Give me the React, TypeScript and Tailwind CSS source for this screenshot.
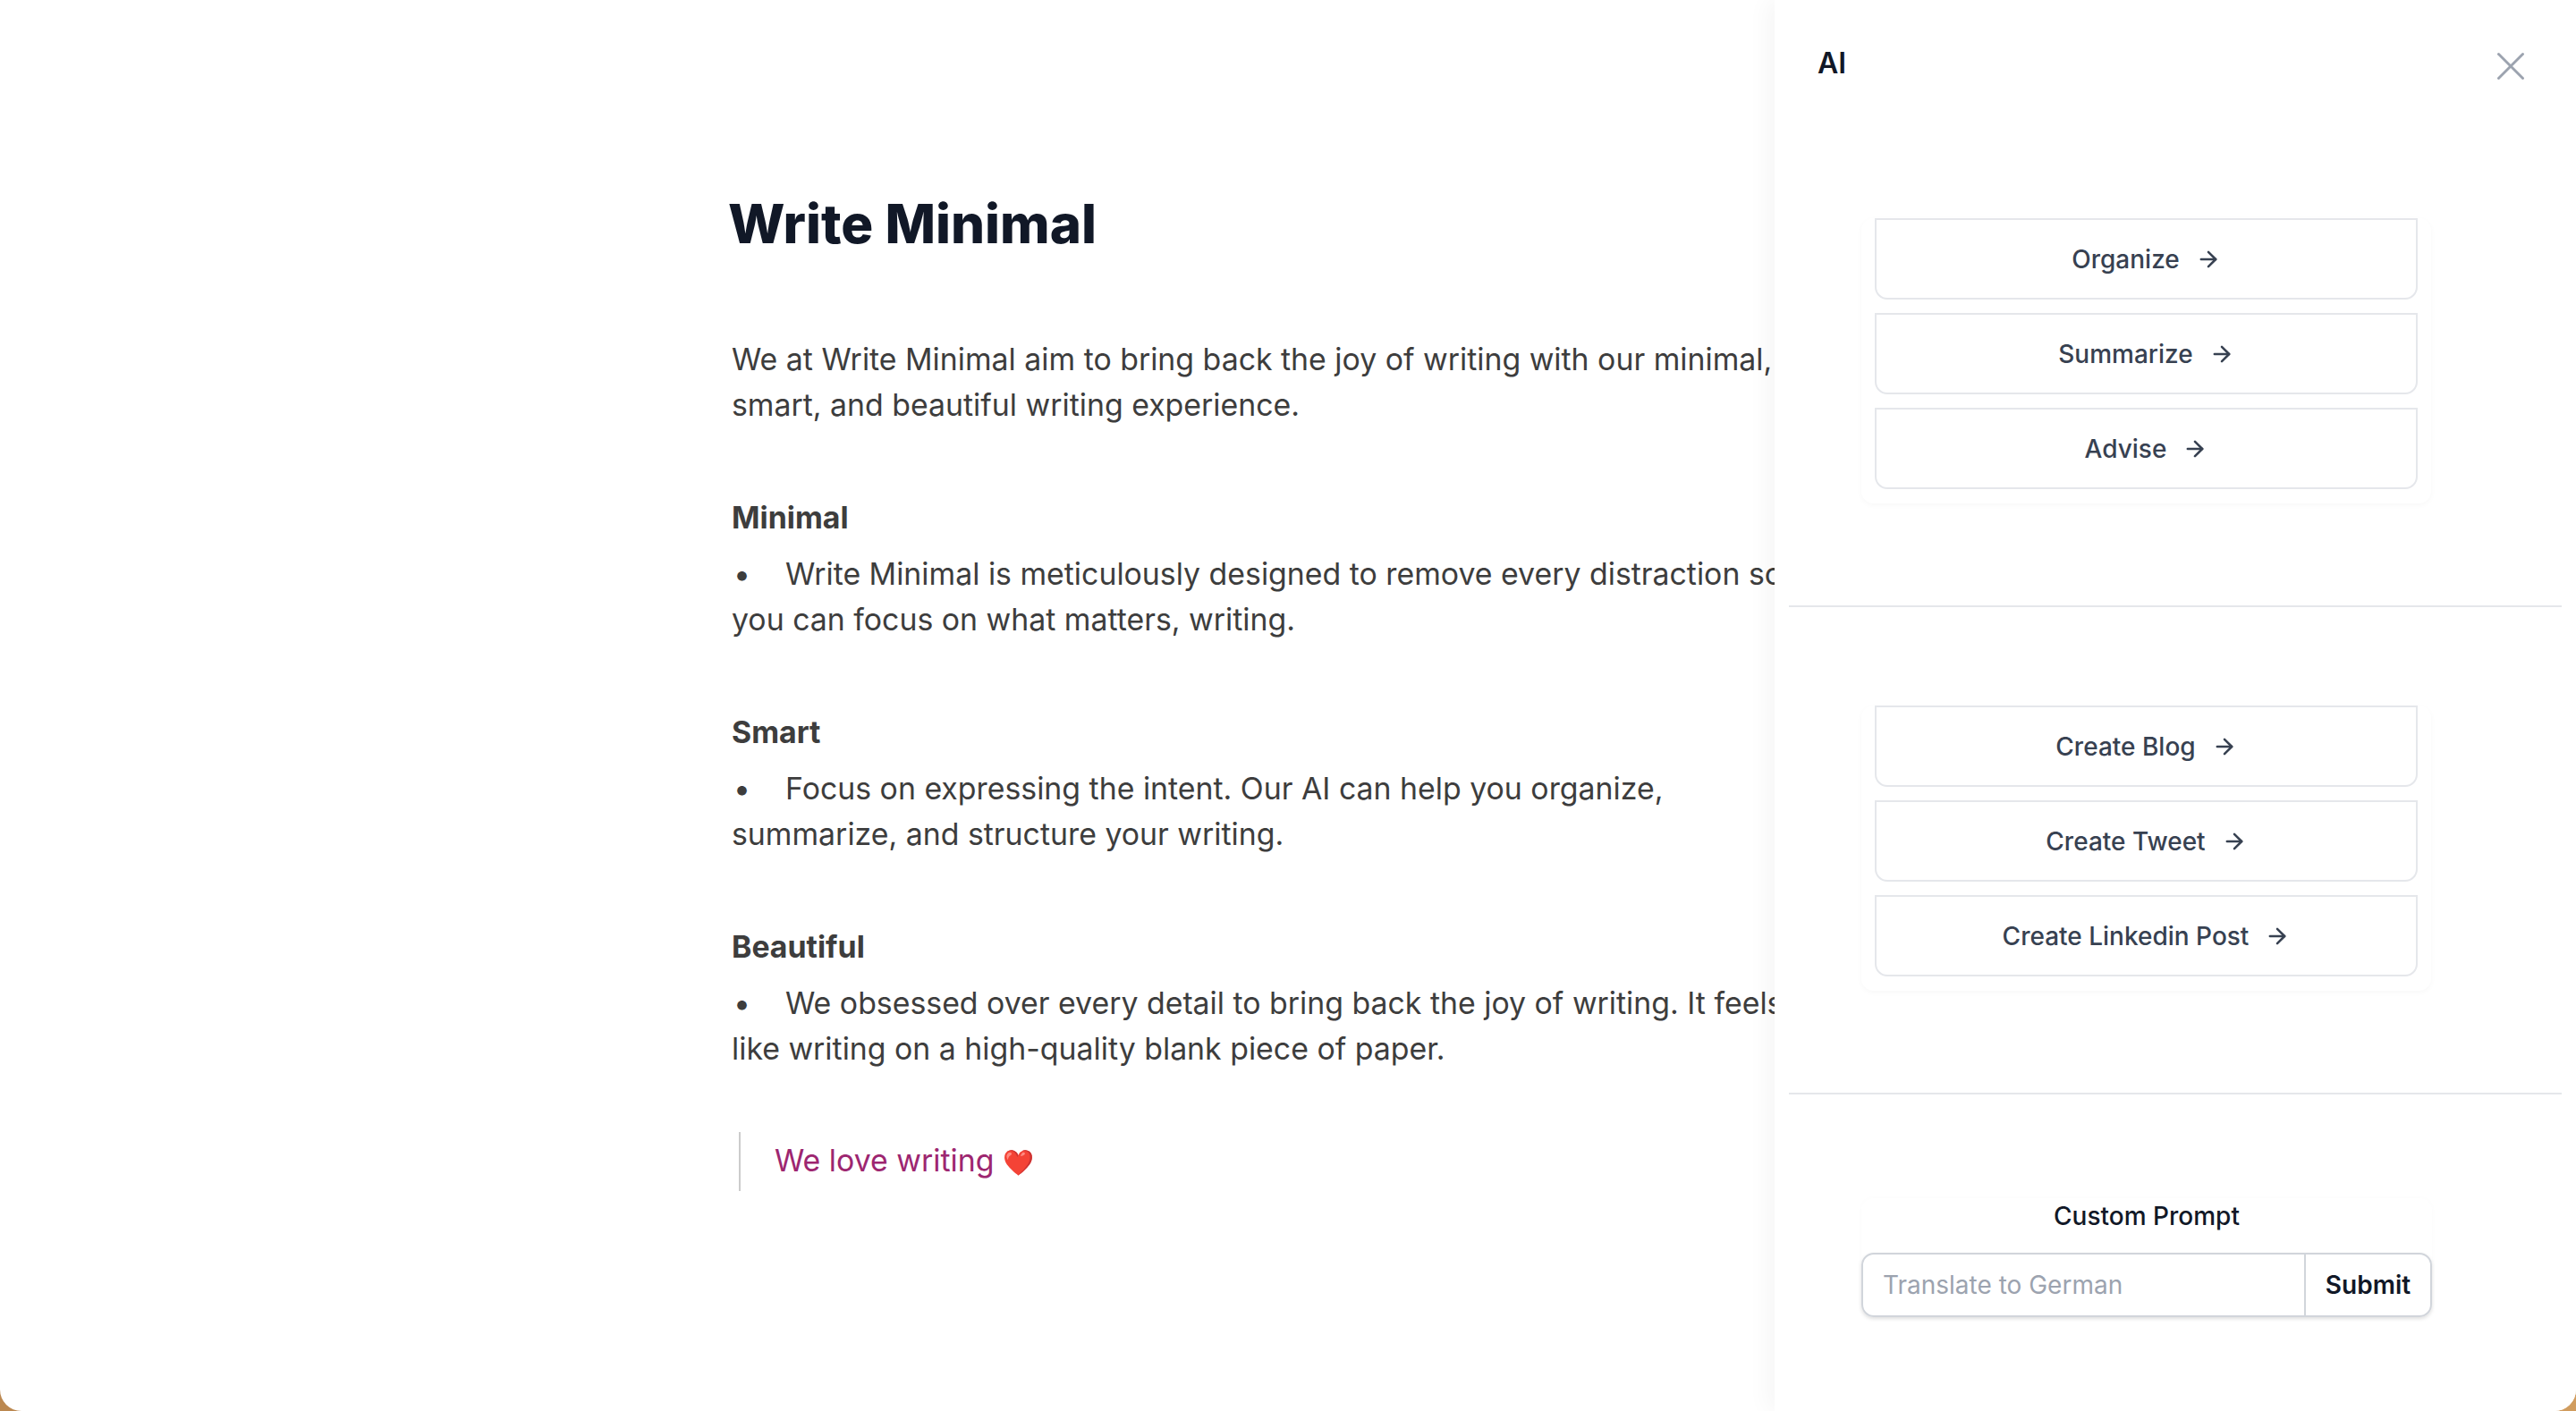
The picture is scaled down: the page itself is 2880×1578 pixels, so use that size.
import { ArrowRight, X } from 'lucide-react'

const GROUPS = [
  ['Organize', 'Summarize', 'Advise'],
  ['Create Blog', 'Create Tweet', 'Create Linkedin Post'],
]

const SECTIONS = [
  {
    title: 'Minimal',
    first: 'Write Minimal is meticulously designed to remove every distraction so',
    second: 'you can focus on what matters, writing.',
  },
  {
    title: 'Smart',
    first: 'Focus on expressing the intent. Our AI can help you organize,',
    second: 'summarize, and structure your writing.',
  },
  {
    title: 'Beautiful',
    first: 'We obsessed over every detail to bring back the joy of writing. It feels',
    second: 'like writing on a high-quality blank piece of paper.',
  },
]

function ActionGroup({ labels }: { labels: string[] }) {
  return (
    <div className="w-[637px] rounded-[14px] px-[15px] pb-[16px] flex flex-col gap-[15px] shadow-[0_2px_6px_rgba(0,0,0,0.03)]">
      {labels.map(label => (
        <button
          key={label}
          className="h-[91px] rounded-b-[14px] border-2 border-[#e5e7eb] flex items-center justify-center gap-[18px] text-[28px] font-medium text-[#374151]"
        >
          {label}
          <ArrowRight size={28} strokeWidth={2.2} />
        </button>
      ))}
    </div>
  )
}

export default function App() {
  return (
    <div className="h-screen w-full overflow-hidden bg-linear-to-r from-[#bb8850] to-[#d19d5f] font-['Inter',sans-serif]">
      <div className="h-full w-full overflow-hidden rounded-b-[24px] bg-white flex">
        {/* editor */}
        <main className="flex-1 min-w-0 overflow-hidden pt-[208px] pl-[814px] text-[33.85px] leading-[51px] text-[#3d3d3d]">
          <div className="w-[1300px]">
            <h1 className="text-[60px] leading-[84px] font-extrabold text-[#111827]">Write Minimal</h1>
            <div className="ml-[4px] mt-[84px]">
              <p>We at Write Minimal aim to bring back the joy of writing with our minimal,</p>
              <p>smart, and beautiful writing experience.</p>
              {SECTIONS.map(s => (
                <section key={s.title} className="mt-[75px]">
                  <h3 className="font-bold mb-[12px]">{s.title}</h3>
                  <p className="flex">
                    <span className="w-[60px] pl-[2px]">•</span>
                    {s.first}
                  </p>
                  <p>{s.second}</p>
                </section>
              ))}
              <blockquote className="mt-[68px] ml-[8px] border-l-2 border-[#cccccc] pl-[38px] py-[6px] text-[#9d2670]">
                We love writing <span className="text-[28px]">❤️</span>
              </blockquote>
            </div>
          </div>
        </main>

        {/* AI panel */}
        <aside className="w-[896px] shrink-0 bg-white shadow-[-8px_0_24px_rgba(0,0,0,0.04)] flex flex-col">
          <header className="h-[244px] shrink-0 flex items-start justify-between pl-[48px] pr-[46px] pt-[47px]">
            <h2 className="mt-[4px] text-[32px] leading-[40px] font-semibold text-[#111827]">AI</h2>
            <X size={54} strokeWidth={1.3} className="text-[#9ca3af]" />
          </header>
          <div className="flex flex-col">
            {GROUPS.map(labels => (
              <div key={labels[0]} className="mx-[16px] border-b-2 border-[#e5e7eb] pl-[81px] pb-[114px] mb-[110px] flex">
                <ActionGroup labels={labels} />
              </div>
            ))}
            <div className="ml-[97px] w-[638px] mt-[6px] rounded-[14px] shadow-[0_0_6px_rgba(0,0,0,0.02)]">
              <p className="text-center text-[28px] leading-[40px] font-medium text-[#111827] mb-[21px]">Custom Prompt</p>
              <div className="h-[72px] flex rounded-[14px] border-2 border-[#d1d5db] shadow-[0_2px_4px_rgba(0,0,0,0.12)] overflow-hidden text-[28px]">
                <input
                  readOnly
                  placeholder="Translate to German"
                  className="flex-1 min-w-0 px-[22px] outline-none placeholder:text-[#9ca3af]"
                />
                <button className="w-[141px] border-l-2 border-[#d1d5db] font-semibold text-[#111827]">Submit</button>
              </div>
            </div>
          </div>
        </aside>
      </div>
    </div>
  )
}
